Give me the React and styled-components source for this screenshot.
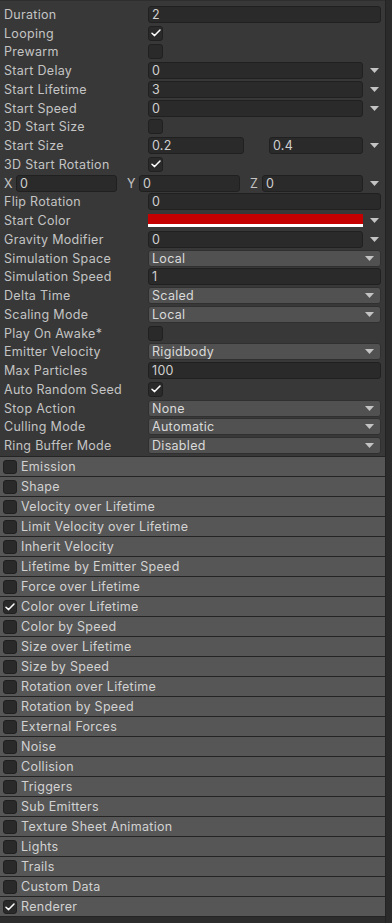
import React from 'react';
import styled, { createGlobalStyle } from 'styled-components';

const GlobalStyle = createGlobalStyle`
  html, body { margin: 0; padding: 0; background: #383838; }
  body {
    font-family: Inter, "Noto Sans", "Liberation Sans", sans-serif;
    font-size: 12.5px;
    color: #c4c4c4;
  }
`;

const Page = styled.div`
  display: flex;
  width: 392px;
  height: 923px;
  overflow: hidden;
  background: #383838;
`;

const Main = styled.div`
  width: 385px;
  display: flex;
  flex-direction: column;
`;

const ScrollTrack = styled.div`
  flex: 1;
  background: #2b2b2b;
  border-left: 1px solid #232323;
`;

const Props = styled.div`
  border-top: 1px solid #2e2e2e;
  padding-top: 4px;
  padding-bottom: 1px;
`;

const Row = styled.div`
  display: grid;
  grid-template-columns: 144px 1fr;
  align-items: center;
  height: 18.75px;
  padding: 0 4px;
`;

const Label = styled.span`
  white-space: nowrap;
  letter-spacing: 0.3px;
  color: #c4c4c4;
`;

const Control = styled.div`
  display: flex;
  align-items: center;
  min-width: 0;
`;

const SecondSlot = styled.div`
  flex: 1 1 0;
  display: flex;
  padding-left: 25px;
  min-width: 0;
`;

const Field = styled.div`
  flex: ${(p) => (p.$w ? `0 0 ${p.$w}px` : '1 1 0')};
  min-width: 0;
  height: 17px;
  box-sizing: border-box;
  background: #2a2a2a;
  border: 1px solid #202020;
  border-radius: 3px;
  display: flex;
  align-items: center;
  padding-left: 3px;
  color: #d0d0d0;
  letter-spacing: 0.3px;
  white-space: nowrap;
  overflow: hidden;
`;

const Popup = styled.div`
  flex: 1 1 0;
  height: 17px;
  box-sizing: border-box;
  background: #515151;
  border: 1px solid #303030;
  border-radius: 3px;
  display: flex;
  align-items: center;
  justify-content: space-between;
  padding: 0 6px 0 3px;
  color: #dadada;
  letter-spacing: 0.3px;
`;

const ArrowBox = styled.div`
  flex: 0 0 18px;
  display: flex;
  justify-content: flex-end;
  align-items: center;
  padding-right: 2px;
  box-sizing: border-box;
`;

const Check = styled.div`
  width: ${(p) => p.$size || 15}px;
  height: ${(p) => p.$size || 15}px;
  box-sizing: border-box;
  background: #2a2a2a;
  border: 1px solid #202020;
  border-radius: 3px;
  display: flex;
  align-items: center;
  justify-content: center;
  flex: none;
`;

const ColorSwatch = styled.div`
  flex: 1 1 0;
  height: 13px;
  display: flex;
  flex-direction: column;
`;

const ColorTop = styled.div`
  flex: 0 0 9.5px;
  background: #c40000;
`;

const ColorAlpha = styled.div`
  flex: 1;
  background: #ffffff;
`;

const AxisRow = styled.div`
  display: flex;
  align-items: center;
  height: 18.75px;
  padding: 0 4px;
`;

const AxisGroups = styled.div`
  flex: 1 1 0;
  display: flex;
  gap: 10px;
  min-width: 0;
`;

const AxisGroup = styled.div`
  flex: 1 1 0;
  display: flex;
  align-items: center;
  min-width: 0;
`;

const AxisLetter = styled.span`
  flex: 0 0 12px;
  color: #c4c4c4;
`;

const Modules = styled.div`
  display: flex;
  flex-direction: column;
`;

const Module = styled.div`
  height: 20px;
  box-sizing: border-box;
  border-top: 1px solid #242424;
  background: #565656;
  display: flex;
  align-items: center;
  padding-left: 3px;
  gap: 4px;
  color: #d2d2d2;
  letter-spacing: 0.3px;
  white-space: nowrap;
`;

const Footer = styled.div`
  flex: 1;
  background: #2d2d2d;
  border-top: 1px solid #242424;
`;

const Tri = () => (
  <svg width="9" height="5" viewBox="0 0 9 5">
    <polygon points="0,0 9,0 4.5,5" fill="#c4c4c4" />
  </svg>
);

const Tick = () => (
  <svg width="10" height="8" viewBox="0 0 10 8">
    <path d="M1 4.2 L3.6 6.6 L9 1" fill="none" stroke="#ffffff" strokeWidth="1.5" strokeLinecap="round" strokeLinejoin="round" />
  </svg>
);

const CurveArrow = () => (
  <ArrowBox>
    <Tri />
  </ArrowBox>
);

const props = [
  { label: 'Duration', type: 'field', value: '2' },
  { label: 'Looping', type: 'check', checked: true },
  { label: 'Prewarm', type: 'check' },
  { label: 'Start Delay', type: 'curve', value: '0' },
  { label: 'Start Lifetime', type: 'curve', value: '3' },
  { label: 'Start Speed', type: 'curve', value: '0' },
  { label: '3D Start Size', type: 'check' },
  { label: 'Start Size', type: 'range', a: '0.2', b: '0.4' },
  { label: '3D Start Rotation', type: 'check', checked: true },
  { type: 'axis' },
  { label: 'Flip Rotation', type: 'field', value: '0' },
  { label: 'Start Color', type: 'color' },
  { label: 'Gravity Modifier', type: 'curve', value: '0' },
  { label: 'Simulation Space', type: 'popup', value: 'Local' },
  { label: 'Simulation Speed', type: 'field', value: '1' },
  { label: 'Delta Time', type: 'popup', value: 'Scaled' },
  { label: 'Scaling Mode', type: 'popup', value: 'Local' },
  { label: 'Play On Awake*', type: 'check' },
  { label: 'Emitter Velocity', type: 'popup', value: 'Rigidbody' },
  { label: 'Max Particles', type: 'field', value: '100' },
  { label: 'Auto Random Seed', type: 'check', checked: true },
  { label: 'Stop Action', type: 'popup', value: 'None' },
  { label: 'Culling Mode', type: 'popup', value: 'Automatic' },
  { label: 'Ring Buffer Mode', type: 'popup', value: 'Disabled' },
];

const modules = [
  ['Emission', false],
  ['Shape', false],
  ['Velocity over Lifetime', false],
  ['Limit Velocity over Lifetime', false],
  ['Inherit Velocity', false],
  ['Lifetime by Emitter Speed', false],
  ['Force over Lifetime', false],
  ['Color over Lifetime', true],
  ['Color by Speed', false],
  ['Size over Lifetime', false],
  ['Size by Speed', false],
  ['Rotation over Lifetime', false],
  ['Rotation by Speed', false],
  ['External Forces', false],
  ['Noise', false],
  ['Collision', false],
  ['Triggers', false],
  ['Sub Emitters', false],
  ['Texture Sheet Animation', false],
  ['Lights', false],
  ['Trails', false],
  ['Custom Data', false],
  ['Renderer', true],
];

function renderControl(p) {
  switch (p.type) {
    case 'field':
      return (
        <Control>
          <Field>{p.value}</Field>
        </Control>
      );
    case 'check':
      return (
        <Control>
          <Check>{p.checked && <Tick />}</Check>
        </Control>
      );
    case 'curve':
      return (
        <Control>
          <Field>{p.value}</Field>
          <CurveArrow />
        </Control>
      );
    case 'range':
      return (
        <Control>
          <Field $w={96}>{p.a}</Field>
          <SecondSlot>
            <Field>{p.b}</Field>
          </SecondSlot>
          <CurveArrow />
        </Control>
      );
    case 'color':
      return (
        <Control>
          <ColorSwatch>
            <ColorTop />
            <ColorAlpha />
          </ColorSwatch>
          <CurveArrow />
        </Control>
      );
    case 'popup':
      return (
        <Control>
          <Popup>
            <span>{p.value}</span>
            <Tri />
          </Popup>
        </Control>
      );
    default:
      return null;
  }
}

export default function App() {
  return (
    <>
      <GlobalStyle />
      <Page>
        <Main>
          <Props>
            {props.map((p, i) =>
              p.type === 'axis' ? (
                <AxisRow key={i}>
                  <AxisGroups>
                    {['X', 'Y', 'Z'].map((a) => (
                      <AxisGroup key={a}>
                        <AxisLetter>{a}</AxisLetter>
                        <Field>0</Field>
                      </AxisGroup>
                    ))}
                  </AxisGroups>
                  <CurveArrow />
                </AxisRow>
              ) : (
                <Row key={i}>
                  <Label>{p.label}</Label>
                  {renderControl(p)}
                </Row>
              )
            )}
          </Props>
          <Modules>
            {modules.map(([name, on]) => (
              <Module key={name}>
                <Check $size={14}>{on && <Tick />}</Check>
                <span>{name}</span>
              </Module>
            ))}
          </Modules>
          <Footer />
        </Main>
        <ScrollTrack />
      </Page>
    </>
  );
}
